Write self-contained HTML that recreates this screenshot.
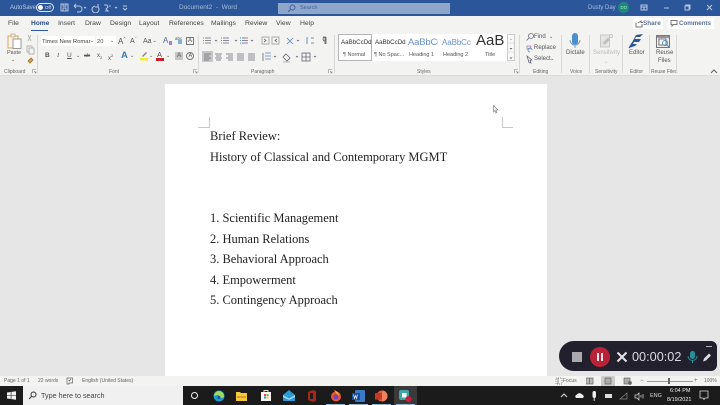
<!DOCTYPE html>
<html><head><meta charset="utf-8">
<style>
html,body{margin:0;padding:0}
html{background:#e6e6e6}
body{width:720px;height:405px;overflow:hidden;position:relative;background:#e6e6e6;font-family:"Liberation Sans",sans-serif;color:#444;filter:blur(.35px)}
div,span.t,svg{position:absolute}
.t{position:absolute;white-space:nowrap;line-height:10px;height:10px;font-size:6.5px;color:#555}
.d{position:absolute;white-space:nowrap;font-family:"Liberation Serif",serif;font-size:12.47px;line-height:16px;color:#222;left:210px}
.tab{font-size:6.8px;color:#444;top:19px}
.lbl{font-size:5px;color:#666;top:67px}
.sep{width:1px;background:#d8d8d8;top:35px;height:38px}
</style></head><body>
<!-- title bar -->
<div style="left:0;top:0;width:720px;height:16px;background:#2b579a"></div>
<span class="t" style="left:10px;top:3px;color:#b9c8e0;font-size:6px">AutoSave</span>
<div style="left:36px;top:3px;width:18px;height:9px;border:1px solid #dfe6f2;border-radius:6px;box-sizing:border-box"></div>
<div style="left:38px;top:5px;width:5px;height:5px;border-radius:50%;background:#fff"></div>
<span class="t" style="left:45px;top:3px;color:#e6ecf5;font-size:4.5px">Off</span>
<svg style="left:60px;top:3px" width="70" height="10" fill="none" stroke="#b7c6df" stroke-width="1">
<rect x="1" y="1" width="7" height="7"/><path d="M3 1v2h3V1M3 8V5h3v3"/>
<path d="M14 3h5a3 3 0 0 1 0 6h-2M14 3l2-2M14 3l2 2"/><path d="M24 4l1 1 1-1"/>
<path d="M35 3a3.5 3.5 0 1 0 3 1M38 1v3h-3"/>
<path d="M44 2h3l1 2-2 2 2 2h-3M49 3h2"/><path d="M55 4l1 1 1-1"/><path d="M63 3h4M63 5l2 2 2-2"/>
</svg>
<span class="t" style="left:179px;top:3px;color:#a9bcd9;font-size:6.5px">Document2 &nbsp;-&nbsp; Word</span>
<div style="left:278px;top:3px;width:172px;height:11px;background:#8fa6cb"></div>
<svg style="left:287px;top:4px" width="9" height="9" fill="none" stroke="#3d629f"><circle cx="5.5" cy="3.5" r="2.5"/><path d="M3.5 5.5L1 8"/></svg>
<span class="t" style="left:300px;top:3px;color:#3d629f;font-size:5.5px">Search</span>
<span class="t" style="left:588px;top:3px;color:#a9bcd9;font-size:6px">Dusty Day</span>
<div style="left:618px;top:2px;width:11px;height:11px;border-radius:50%;background:#1d8a79"></div>
<span class="t" style="left:620.500px;top:2.500px;color:#a9e0d4;font-size:4.5px">DD</span>
<svg style="left:640px;top:3px" width="75" height="10" fill="none" stroke="#b7c6df" stroke-width="1">
<rect x="1" y="2" width="6" height="5"/><path d="M1 4h6M4 4v3"/><path d="M24 5h5"/><rect x="45" y="3" width="4" height="4"/><path d="M46 3V2h4v4h-1"/><path d="M67 2l5 5M72 2l-5 5"/>
</svg>

<!-- tabs + ribbon -->
<div style="left:0;top:16px;width:720px;height:59px;background:#f3f3f2"></div>
<div style="left:0;top:75px;width:720px;height:1px;background:#dcdcdc"></div>
<span class="t tab" style="left:8px">File</span>
<span class="t tab" style="left:31px;color:#2b4f86;font-weight:bold;font-size:6.6px">Home</span>
<div style="left:31px;top:29.500px;width:17px;height:1.5px;background:#2b579a"></div>
<span class="t tab" style="left:58px">Insert</span>
<span class="t tab" style="left:85px">Draw</span>
<span class="t tab" style="left:110px">Design</span>
<span class="t tab" style="left:139px">Layout</span>
<span class="t tab" style="left:169px">References</span>
<span class="t tab" style="left:211px">Mailings</span>
<span class="t tab" style="left:245px">Review</span>
<span class="t tab" style="left:276px">View</span>
<span class="t tab" style="left:300px">Help</span>

<div style="left:633px;top:18px;width:30px;height:11px;background:#fff"></div>
<svg style="left:635px;top:19px" width="9" height="9" fill="none" stroke="#777"><path d="M1 4v4h6V5M3 4l3-2v1.5h2"/></svg>
<span class="t" style="left:643px;top:19px;font-size:6.4px;font-weight:bold;color:#5a7196">Share</span>
<div style="left:668px;top:18px;width:46px;height:11px;background:#fff"></div>
<svg style="left:670px;top:19px" width="9" height="9" fill="none" stroke="#777"><path d="M1 1.5h6v4H3.5L2 7V5.5H1z"/></svg>
<span class="t" style="left:679px;top:19px;font-size:6.2px;font-weight:bold;color:#5a7196">Comments</span>

<!-- clipboard -->
<svg style="left:6px;top:33px" width="18" height="16"><rect x="2" y="3" width="10" height="12" fill="#fdf3e4" stroke="#d8a868"/><rect x="5" y="1" width="4" height="3" fill="#eee" stroke="#c09868" stroke-width=".6"/><rect x="7" y="6" width="8" height="9.500" fill="#fff" stroke="#999"/></svg>
<span class="t" style="left:7px;top:47.500px;font-size:5.5px">Paste</span>
<span class="t" style="left:11px;top:55px;font-size:5px">⌄</span>
<svg style="left:25px;top:34px" width="10" height="32" fill="none" stroke="#a8a8a8" stroke-width=".8"><path d="M3 1l3 6M6 1L3 7"/><rect x="2" y="12" width="5" height="6"/><rect x="4" y="14" width="5" height="6" fill="#f3f3f2"/><path d="M3 27l3-3 2 2-3 3z" fill="#d8a040" stroke="#a07030"/></svg>
<span class="lbl t" style="left:4px">Clipboard</span>
<svg style="left:32px;top:69px" width="5" height="5" fill="none" stroke="#888" stroke-width=".6"><path d="M.5 4V.5H4M2 2l2 2M4 2.5V4H2.5"/></svg>
<div class="sep" style="left:37px"></div>

<!-- font -->
<div style="left:41px;top:36px;width:54px;height:10px;background:#fff"></div>
<span class="t" style="left:42px;top:36.500px;font-size:5.9px;color:#444">Times New Romar</span>
<span class="t" style="left:90px;top:36px;font-size:5px">⌄</span>
<div style="left:96px;top:36px;width:20px;height:10px;background:#fff"></div>
<span class="t" style="left:97px;top:36.500px;font-size:5.8px">20</span>
<span class="t" style="left:110px;top:36px;font-size:5px">⌄</span>
<span class="t" style="left:118px;top:36.500px;font-size:8px">A</span><span class="t" style="left:123.500px;top:34px;font-size:4.500px">^</span>
<span class="t" style="left:130px;top:36.500px;font-size:7px">A</span><span class="t" style="left:135px;top:34px;font-size:4.500px">ˇ</span>
<span class="t" style="left:143px;top:36.500px;font-size:7px">Aa</span><span class="t" style="left:152.500px;top:36px;font-size:5px">⌄</span>
<span class="t" style="left:163px;top:36px;font-size:8px;color:#5a6f96">A</span>
<div style="left:169px;top:41px;width:3px;height:4px;background:#b27bc0"></div>
<span class="t" style="left:175px;top:34px;font-size:4.5px">abc</span>
<div style="left:178px;top:40px;width:4px;height:4px;background:#7fb0d8"></div>
<div style="left:186px;top:37px;width:8px;height:8px;border:.7px solid #777;box-sizing:border-box"></div>
<span class="t" style="left:188px;top:36px;font-size:6px">A</span>

<span class="t" style="left:45px;top:51px;font-size:6.5px;font-weight:bold">B</span>
<span class="t" style="left:57px;top:51px;font-size:6.5px;font-style:italic;font-family:'Liberation Serif',serif">I</span>
<span class="t" style="left:67px;top:51px;font-size:6.5px;text-decoration:underline">U</span><span class="t" style="left:76px;top:51px;font-size:5px">⌄</span>
<span class="t" style="left:84px;top:51px;font-size:5.5px;text-decoration:line-through">ab</span>
<span class="t" style="left:97px;top:51px;font-size:6px">x<sub style="font-size:4px">2</sub></span>
<span class="t" style="left:108px;top:51px;font-size:6px">x<sup style="font-size:4px">2</sup></span>
<span class="t" style="left:121px;top:50.500px;font-size:9.500px;font-weight:bold;color:#3d78c0">A</span><span class="t" style="left:130px;top:51px;font-size:5px">⌄</span>
<svg style="left:139px;top:50px" width="10" height="11"><path d="M3 6l4-4 1 1-4 4z" fill="#888"/><rect x="1" y="8" width="8" height="2.5" fill="#f2ee2c"/></svg><span class="t" style="left:149px;top:51px;font-size:5px">⌄</span>
<span class="t" style="left:157px;top:50px;font-size:7.5px;color:#555">A</span>
<div style="left:156px;top:58px;width:8px;height:2.5px;background:#c8202a"></div><span class="t" style="left:166px;top:51px;font-size:5px">⌄</span>
<div style="left:175px;top:52px;width:8px;height:8px;background:#c4c4c4"></div>
<span class="t" style="left:177px;top:51px;font-size:6.5px">A</span>
<div style="left:186px;top:52px;width:8px;height:8px;border:.7px solid #777;border-radius:50%;box-sizing:border-box"></div>
<span class="t" style="left:188.5px;top:51px;font-size:5.5px">A</span>
<span class="lbl t" style="left:109px">Font</span>
<svg style="left:193px;top:69px" width="5" height="5" fill="none" stroke="#888" stroke-width=".6"><path d="M.5 4V.5H4M2 2l2 2M4 2.5V4H2.5"/></svg>
<div class="sep" style="left:198px"></div>

<!-- paragraph -->
<svg style="left:201px;top:35px" width="130" height="27" fill="none" stroke="#667" stroke-width=".8">
<path d="M4 3h6M4 5.5h6M4 8h6" /><path d="M2 3h1M2 5.5h1M2 8h1" stroke="#3d78c0"/>
<path d="M14 5l1 1 1-1"/>
<path d="M22 3h6M22 5.5h6M22 8h6"/><path d="M20 3h1M20 5.5h1M20 8h1" stroke="#3d78c0"/>
<path d="M34 5l1 1 1-1"/>
<path d="M41 3h6M41 5.5h6M41 8h6"/><path d="M39 3h1M39 5.5h1M39 8h1" stroke="#3d78c0"/>
<path d="M50 5l1 1 1-1"/>
<rect x="61" y="2" width="7" height="7" stroke="#999"/><path d="M63 4l2 1.5L63 7"/>
<rect x="71" y="2" width="7" height="7" stroke="#999"/><path d="M76 4l-2 1.5L76 7"/>
<path d="M86 3l6 6M92 3l-6 6" stroke="#5586c0"/><path d="M96 5l1 1 1-1"/>
<path d="M106 2v7" stroke="#3d78c0"/><path d="M110 3h3M110 8h3"/>
<path d="M122 2h3M124 2v7M125 2v7M124 2a2 2 0 0 0 0 4" stroke="#555"/>
</svg>
<div style="left:202px;top:51px;width:11px;height:11px;background:#c6c6c6"></div>
<svg style="left:201px;top:50px" width="130" height="14" fill="none" stroke="#667" stroke-width=".8">
<path d="M3 4h7M3 6h5M3 8h7M3 10h5"/>
<path d="M14 4h7M15 6h5M14 8h7M15 10h5"/>
<path d="M25 4h7M27 6h5M25 8h7M27 10h5"/>
<path d="M36 4h7M36 6h7M36 8h7M36 10h7"/>
<path d="M47 4h7M47 6h7M47 8h7M47 10h7"/>
<path d="M64 3h6M64 6h6M64 9h6" stroke="#5586c0"/><path d="M62 3v8"/><path d="M73 6l1 1 1-1"/>
<path d="M85 4l4 4-3 3-4-4z"/><path d="M82 12h7" stroke="#aaa"/><path d="M95 6l1 1 1-1"/>
<rect x="101" y="3" width="8" height="8"/><path d="M105 3v8M101 7h8"/><path d="M113 6l1 1 1-1"/>
</svg>
<span class="lbl t" style="left:251px">Paragraph</span>
<svg style="left:328px;top:69px" width="5" height="5" fill="none" stroke="#888" stroke-width=".6"><path d="M.5 4V.5H4M2 2l2 2M4 2.5V4H2.5"/></svg>
<div class="sep" style="left:334px"></div>

<!-- styles -->
<div style="left:338px;top:34px;width:169px;height:27px;background:#fff"></div>
<div style="left:338px;top:34px;width:34px;height:27px;border:1.2px solid #b5b5b5;box-sizing:border-box"></div>
<span class="t" style="left:341px;top:38px;font-size:6.2px;color:#333">AaBbCcDd</span>
<span class="t" style="left:343px;top:50px;font-size:5.5px">¶ Normal</span>
<span class="t" style="left:375px;top:38px;font-size:6.2px;color:#333">AaBbCcDd</span>
<span class="t" style="left:374px;top:50px;font-size:5.5px">¶ No Spac...</span>
<div style="left:408px;top:34px;width:30px;height:16px;overflow:hidden"><span class="t" style="left:0;top:4px;font-size:9.5px;color:#6a90c4;letter-spacing:-.2px">AaBbCc</span></div>
<span class="t" style="left:409px;top:50px;font-size:5.5px">Heading 1</span>
<div style="left:442px;top:34px;width:29px;height:16px;overflow:hidden"><span class="t" style="left:0;top:4px;font-size:8px;color:#6a90c4;letter-spacing:-.1px">AaBbCcE</span></div>
<span class="t" style="left:443px;top:50px;font-size:5.5px">Heading 2</span>
<span class="t" style="left:476px;top:36px;font-size:15px;color:#333">AaB</span>
<span class="t" style="left:485px;top:50px;font-size:5.5px">Title</span>
<div style="left:507px;top:34px;width:8px;height:27px;background:#f8f8f8;border:.5px solid #ccc;box-sizing:border-box"></div>
<svg style="left:507px;top:34px" width="8" height="27" fill="#666"><path d="M2.5 6h3L4 4.5z" fill="#bbb"/><path d="M2.5 14h3L4 15.500z"/><path d="M2 22h4M2.500 23.500h3L4 25z"/><path d="M0 9h8M0 18h8" stroke="#ccc" stroke-width=".5"/></svg>
<span class="lbl t" style="left:417px">Styles</span>
<svg style="left:514px;top:69px" width="5" height="5" fill="none" stroke="#888" stroke-width=".6"><path d="M.5 4V.5H4M2 2l2 2M4 2.5V4H2.5"/></svg>
<div class="sep" style="left:519px"></div>

<!-- editing -->
<svg style="left:525px;top:32px" width="10" height="32" fill="none" stroke="#667" stroke-width=".8">
<circle cx="6" cy="4" r="2.500"/><path d="M4 6L1.500 8.500"/>
<path d="M2 14h4l-1 3h-3z" stroke="#b27bc0"/><path d="M5 20a2 2 0 1 1 2-2" stroke="#5586c0"/>
<path d="M2 24l5 4-2 .5 1 2.500-2-.5z"/>
</svg>
<span class="t" style="left:534px;top:32px;font-size:6px">Find</span><span class="t" style="left:549px;top:32px;font-size:5px">⌄</span>
<span class="t" style="left:534px;top:43px;font-size:6px">Replace</span>
<span class="t" style="left:534px;top:54px;font-size:6px">Select</span><span class="t" style="left:550px;top:54px;font-size:5px">⌄</span>
<span class="lbl t" style="left:533px">Editing</span>
<div class="sep" style="left:561px"></div>

<!-- voice -->
<svg style="left:568px;top:33px" width="14" height="17"><rect x="4" y="0" width="6" height="12" rx="3" fill="#4a90d0"/><path d="M2 7a5 5 0 0 0 10 0M7 12v3" fill="none" stroke="#7a9ec0"/></svg>
<span class="t" style="left:566px;top:48px;font-size:6px">Dictate</span>
<span class="lbl t" style="left:570px">Voice</span>
<div class="sep" style="left:589px"></div>

<!-- sensitivity -->
<svg style="left:599px;top:33px" width="15" height="16" fill="none" stroke="#c8c8c8"><rect x="1.500" y="2" width="9" height="12" fill="#e6e6e6"/><path d="M4 10l5-5 1.500 1.500-5 5z" fill="#bbb"/><circle cx="12" cy="3" r="1.500"/></svg>
<span class="t" style="left:593px;top:48px;font-size:6px;color:#bbb">Sensitivity</span>
<span class="t" style="left:604px;top:57px;font-size:5px;color:#bbb">⌄</span>
<span class="lbl t" style="left:595px">Sensitivity</span>
<div class="sep" style="left:622px"></div>

<!-- editor -->
<svg style="left:628px;top:33px" width="17" height="16"><path d="M1 15L8 2l7-1-3 3H8l-1 2h6l-2 3H6l-1 2h4l-2 2z" fill="#2b579a"/><path d="M1 15l3-5" stroke="#2b579a"/></svg>
<span class="t" style="left:629px;top:48px;font-size:6px">Editor</span>
<span class="lbl t" style="left:630px">Editor</span>
<div class="sep" style="left:649px"></div>

<!-- reuse -->
<svg style="left:655px;top:34px" width="17" height="15" fill="none" stroke="#777"><rect x="1.500" y="1.500" width="13" height="12" fill="#eaeaea"/><path d="M1.500 3h13" stroke-width="1.500"/><rect x="4" y="5" width="7" height="6" fill="#fff"/><circle cx="10" cy="9" r="2.500" stroke="#4a90c0"/><path d="M12 11l2.500 2.500" stroke="#4a90c0"/></svg>
<span class="t" style="left:656px;top:48px;font-size:6px">Reuse</span>
<span class="t" style="left:658px;top:55.500px;font-size:6px">Files</span>
<span class="lbl t" style="left:651px">Reuse Files</span>
<div class="sep" style="left:676px"></div>
<svg style="left:710px;top:69px" width="8" height="5" fill="none" stroke="#666"><path d="M1 4l3-3 3 3"/></svg>

<!-- page -->
<div style="left:165px;top:84px;width:382px;height:292px;background:#fff"></div>
<svg style="left:196px;top:116px" width="322" height="14" fill="none" stroke="#c8c8c8"><path d="M2 11.500H13.500V1"/><path d="M306.500 1V11.500H317"/></svg>
<svg style="left:493px;top:105px" width="6" height="9"><path d="M.5.500v6.500l1.500-1.500 1 2.500 1-.5-1-2.500h2z" fill="#fff" stroke="#777" stroke-width=".6"/></svg>
<div class="d" style="top:128px">Brief Review:</div>
<div class="d" style="top:149px">History of Classical and Contemporary MGMT</div>
<div class="d" style="top:210px">1. Scientific Management</div>
<div class="d" style="top:231px">2. Human Relations</div>
<div class="d" style="top:251px">3. Behavioral Approach</div>
<div class="d" style="top:272px">4. Empowerment</div>
<div class="d" style="top:292px">5. Contingency Approach</div>

<!-- status bar -->
<div style="left:0;top:376px;width:720px;height:10px;background:#f3f3f2"></div>
<span class="t" style="left:4px;top:376px;font-size:5px;color:#666">Page 1 of 1</span>
<span class="t" style="left:38px;top:376px;font-size:5px;color:#666">22 words</span>
<svg style="left:66px;top:377px" width="8" height="8" fill="none" stroke="#666" stroke-width=".7"><path d="M1 1h5.500v5H3v1H1zM2.500 3l1 1 1.500-2"/></svg>
<span class="t" style="left:82px;top:376px;font-size:5px;color:#666">English (United States)</span>
<svg style="left:555px;top:377px" width="8" height="8" fill="none" stroke="#666" stroke-width=".7"><path d="M1 1h6v6H1z" stroke-dasharray="1 1"/><path d="M3 1v6"/></svg>
<span class="t" style="left:563px;top:376px;font-size:5px;color:#666">Focus</span>
<svg style="left:586px;top:376px" width="50" height="10" fill="none" stroke="#666" stroke-width=".7"><rect x="0" y="2" width="7" height="6" fill="#bbb"/><path d="M3.500 2v6"/><rect x="15" y="0" width="14" height="10" fill="#ccc" stroke="none"/><rect x="19" y="2" width="6" height="6" fill="#aaa"/><rect x="38" y="2" width="6" height="6" fill="#aaa"/><circle cx="44" cy="7" r="1.500" fill="#666"/></svg>
<span class="t" style="left:640px;top:376px;font-size:6px;color:#666">−</span>
<div style="left:647px;top:381px;width:46px;height:.7px;background:#999"></div>
<div style="left:668px;top:378px;width:2px;height:6px;background:#666"></div>
<span class="t" style="left:694px;top:376px;font-size:6px;color:#666">+</span>
<span class="t" style="left:704px;top:376px;font-size:5px;color:#666">100%</span>

<!-- taskbar -->
<div style="left:0;top:386px;width:720px;height:19px;background:#1b1b1b"></div>
<svg style="left:7px;top:391px" width="9" height="9" fill="#f0f0f0"><path d="M0 1.500l3.800-.5v3.200H0zM4.400.900L9 .200v4H4.400zM0 4.800h3.800V8L0 7.500zM4.400 4.800H9v4l-4.600-.7z"/></svg>
<div style="left:23px;top:386px;width:160px;height:19px;background:#f0f0f0"></div>
<svg style="left:28px;top:391px" width="9" height="9" fill="none" stroke="#333"><circle cx="5.500" cy="3.500" r="2.500"/><path d="M3.700 5.300L1 8"/></svg>
<span class="t" style="left:41px;top:391px;font-size:7.2px;color:#444">Type here to search</span>
<div style="left:191px;top:392px;width:7px;height:7px;border:1.200px solid #f0f0f0;border-radius:50%;box-sizing:border-box"></div>
<svg style="left:213px;top:390px" width="12" height="12"><circle cx="6" cy="6" r="5.500" fill="#1b9ad0"/><path d="M1 6a5 5 0 0 1 10 0c0 2-2 2-3 2-2 0-1-3-3-3S2 6 1 6z" fill="#9fdc5c"/><circle cx="6" cy="7.500" r="1.500" fill="#1b4e9a"/></svg>
<svg style="left:236px;top:391px" width="12" height="10"><path d="M0 1h4l1 1h6v8H0z" fill="#f5c842"/><rect x="1" y="5" width="9" height="2" fill="#d8a020"/></svg>
<svg style="left:260px;top:389px" width="12" height="12"><path d="M4 3V1.500h4V3" fill="none" stroke="#ddd"/><rect x="1" y="3" width="10" height="9" fill="#f5f5f5"/><rect x="4" y="5" width="2" height="2" fill="#e05030"/><rect x="6.500" y="5" width="2" height="2" fill="#80b040"/><rect x="4" y="7.500" width="2" height="2" fill="#3090e0"/><rect x="6.500" y="7.500" width="2" height="2" fill="#f0c030"/></svg>
<svg style="left:283px;top:390px" width="12" height="12"><path d="M0 5l6-5 6 5v6H0z" fill="#2a9ad8"/><path d="M0 5l6 3.500L12 5v2L6 10 0 7z" fill="#9ad8f0"/></svg>
<svg style="left:307px;top:390px" width="10" height="12"><path d="M1 2l5-2 3 1v10l-3 1-5-2z" fill="#a82818"/><rect x="3" y="3" width="3" height="6" fill="#1b1b1b"/></svg>
<svg style="left:330px;top:390px" width="12" height="12"><circle cx="6" cy="6.500" r="5" fill="#e8562c"/><circle cx="6" cy="7" r="2.500" fill="#7a3fc0"/><path d="M4 0c3 1 5 3 5 6L6 3z" fill="#f8b030"/></svg>
<svg style="left:352px;top:390px" width="13" height="12"><rect x="3" y="0" width="10" height="12" rx="1" fill="#3a7bc8"/><rect x="0" y="3" width="8" height="7" fill="#1b4e9a"/><path d="M1.500 4.500l1 4 1-3 1 3 1-4" stroke="#fff" stroke-width=".6" fill="none"/></svg>
<svg style="left:375px;top:390px" width="13" height="12"><circle cx="7" cy="6" r="5.500" fill="#e0583c"/><path d="M7 .500a5.500 5.500 0 0 1 0 11z" fill="#f08060"/><rect x="0" y="3" width="7" height="6.500" fill="#c23b22"/></svg>
<div style="left:394px;top:386px;width:23px;height:19px;background:#3a3a3a"></div>
<svg style="left:398px;top:390px" width="15" height="13"><rect x="1" y="0" width="10" height="10" rx="2" fill="#3fa6a8"/><rect x="4" y="3" width="4.500" height="4.500" fill="#fff"/><circle cx="10.500" cy="9" r="3" fill="#c8203c"/></svg>
<div style="left:326px;top:404px;width:19px;height:1px;background:#8fb8e0"></div>
<div style="left:349px;top:404px;width:19px;height:1px;background:#8fb8e0"></div>
<div style="left:372px;top:404px;width:19px;height:1px;background:#8fb8e0"></div>
<div style="left:396px;top:404px;width:19px;height:1px;background:#8fb8e0"></div>
<svg style="left:560px;top:390px" width="88" height="12" fill="none" stroke="#ddd">
<path d="M1 7l3-3 3 3"/>
<path d="M16 8a2 2 0 0 1 1-3.500 3 3 0 0 1 5 0 2 2 0 0 1 1 3.500z" fill="#eee" stroke="none"/>
<rect x="32.500" y="1" width="3.500" height="7" rx="1.700" fill="#eee" stroke="none"/><path d="M34.200 8v3" />
<rect x="45" y="4" width="7" height="4" fill="#ddd" stroke="none"/>
<path d="M60 9l7-6v6z" stroke="#888" stroke-width=".7"/>
<path d="M75 5h2l2-2v7l-2-2h-2zM81 5v2.500M83 4v4.500" stroke-width=".7"/>
</svg>
<span class="t" style="left:650px;top:391px;font-size:5.500px;color:#ddd">ENG</span>
<span class="t" style="left:670px;top:386px;font-size:5.500px;color:#eee">6:04 PM</span>
<span class="t" style="left:667px;top:395px;font-size:5.500px;color:#eee">8/19/2021</span>
<svg style="left:699px;top:390px" width="11" height="11" fill="none" stroke="#ddd" stroke-width=".8"><path d="M1 1h8v7H6L5 9.500 4 8H1z"/></svg>

<!-- recorder -->
<div style="left:559px;top:341px;width:158px;height:30px;background:#22202c;border-radius:15px 6px 6px 15px"></div>
<div style="left:572px;top:352px;width:10px;height:10px;background:#a9a9ae"></div>
<div style="left:590px;top:347px;width:20px;height:20px;border-radius:50%;background:#b92338"></div>
<div style="left:597px;top:353px;width:2px;height:8px;background:#f2e6e8"></div>
<div style="left:601px;top:353px;width:2px;height:8px;background:#f2e6e8"></div>
<svg style="left:616px;top:351px" width="12" height="12" fill="none" stroke="#e6e6ea" stroke-width="2"><path d="M1.500 1.500l9 9M10.500 1.500l-9 9"/></svg>
<span class="t" style="left:632px;top:349px;font-size:12.700px;line-height:16px;height:16px;color:#dcdce0">00:00:02</span>
<svg style="left:687px;top:350px" width="11" height="14"><rect x="3" y="1" width="5" height="8" rx="2.500" fill="#2a8f9a"/><path d="M1 6a4.500 4.500 0 0 0 9 0M5.500 10.500v2.500" fill="none" stroke="#2a8f9a"/></svg>
<svg style="left:702px;top:351px" width="11" height="12"><path d="M1 10.500l1-3 5-5 2 2-5 5z" fill="#dcdce0"/></svg>
<div style="left:706px;top:345.500px;width:6px;height:1px;background:#b0b0b5"></div>
</body></html>
